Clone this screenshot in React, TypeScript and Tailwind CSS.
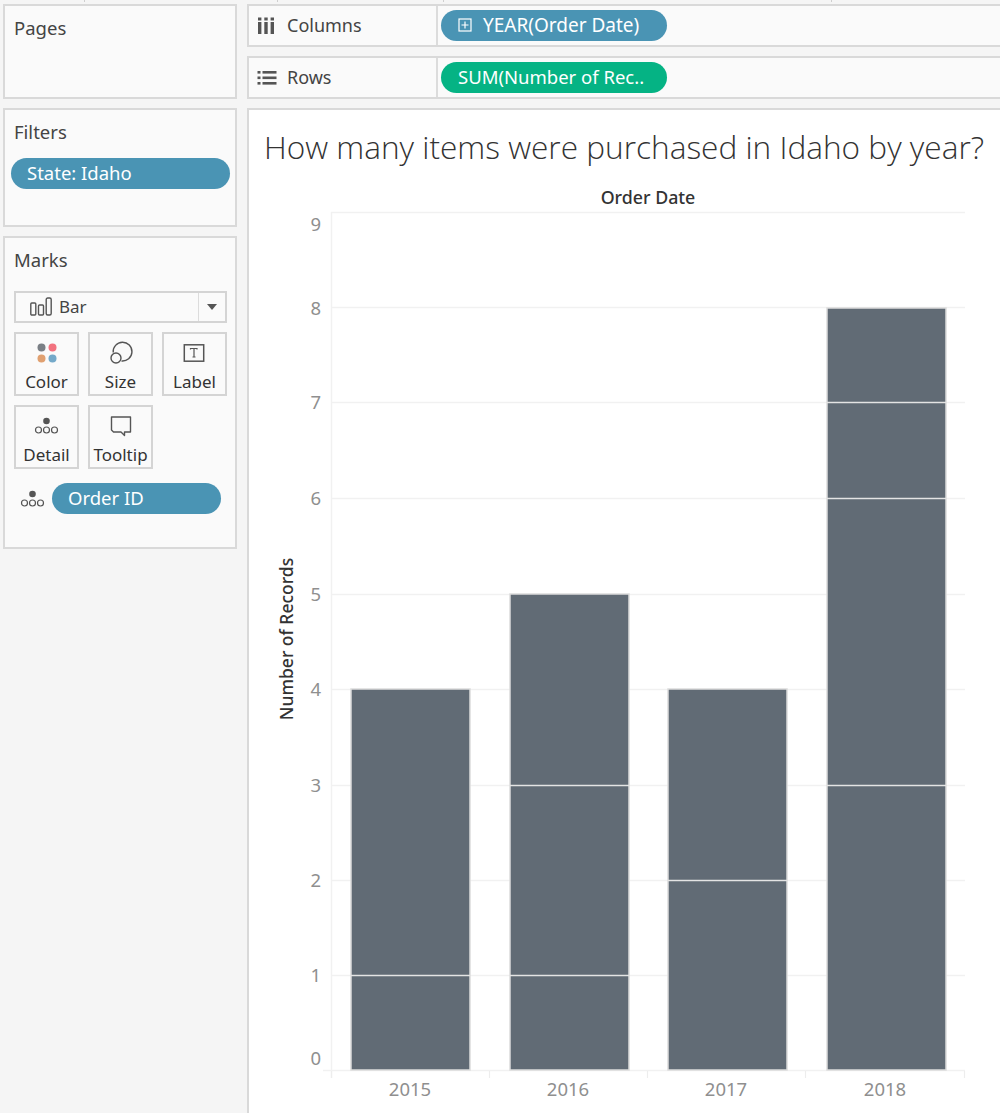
import React from "react";

const font = { fontFamily: '"Noto Sans", "Open Sans", sans-serif' };

function DetailIcon() {
  return (
    <svg width="25" height="20" viewBox="0 0 25 20" fill="none" stroke="#555" strokeWidth="1.2">
      <circle cx="12.5" cy="5" r="3.3" fill="#555" stroke="none" />
      <circle cx="4.5" cy="14" r="3" />
      <circle cx="12.5" cy="14" r="3" />
      <circle cx="20.5" cy="14" r="3" />
    </svg>
  );
}

function MarkCard({ label, icon }: { label: string; icon: React.ReactNode }) {
  return (
    <div className="h-[64px] border-2 border-[#d4d4d4] flex flex-col items-center pt-[6px] text-[#333] text-[17px] leading-[24px]">
      <div className="h-[26px] flex items-center justify-center">{icon}</div>
      <div className="mt-[4px] whitespace-nowrap">{label}</div>
    </div>
  );
}

function Pill({ children, className }: { children: React.ReactNode; className: string }) {
  return (
    <div className={`h-[31px] pb-[1px] rounded-full text-white text-[18.5px] flex items-center whitespace-nowrap ${className}`}>{children}</div>
  );
}

function Shelf({ icon, label, children }: { icon: React.ReactNode; label: string; children: React.ReactNode }) {
  return (
    <div className="h-[43px] shrink-0 border-y-2 border-l-2 border-[#d9d9d9] bg-[#fafafa] flex">
      <div className="w-[189px] border-r-2 border-[#dcdcdc] flex items-center pl-[8px] text-[#444] text-[18px]">
        <div className="w-[30px]">{icon}</div>
        {label}
      </div>
      <div className="flex items-center pl-[3px]">{children}</div>
    </div>
  );
}

const grid = [212, 307, 402, 498, 594, 689, 785, 880, 975, 1070];
const bars = [
  { x: 351, top: 689, lines: [975] },
  { x: 510, top: 594, lines: [785, 975] },
  { x: 668, top: 689, lines: [880] },
  { x: 827, top: 308, lines: [402, 498, 785] },
];
const ticks = [331, 489, 647, 805, 964];
const years = [
  [410, "2015"],
  [568, "2016"],
  [726, "2017"],
  [885, "2018"],
] as const;
const labelY = [231, 315, 409, 505, 601, 696, 792, 887, 982, 1065];

function Chart() {
  return (
    <svg className="block" width="751" height="1003" viewBox="249 110 751 1003">
      <g fontFamily='"Noto Sans", sans-serif'>
        <text x="648" y="204" textAnchor="middle" fontSize="17.8" fontWeight="500" fill="#333">Order Date</text>
        {grid.map((y) => (
          <line key={y} x1={y === 1070 ? 323 : 331} x2="965" y1={y + 0.5} y2={y + 0.5} stroke="#f1f1f1" strokeWidth="1.5" />
        ))}
        <line x1="331.5" x2="331.5" y1="212" y2="1078" stroke="#f1f1f1" strokeWidth="1.5" />
        {ticks.map((x) => (
          <line key={x} x1={x + 0.5} x2={x + 0.5} y1="1071" y2="1078" stroke="#ededed" strokeWidth="1.2" />
        ))}
        {bars.map((b) => (
          <g key={b.x}>
            <rect x={b.x} y={b.top} width="119" height={1070 - b.top} fill="#616b75" stroke="#dcdcdc" strokeWidth="1.5" />
            {b.lines.map((y) => (
              <line key={y} x1={b.x} x2={b.x + 119} y1={y + 0.5} y2={y + 0.5} stroke="#e4e4e4" strokeWidth="1.3" />
            ))}
          </g>
        ))}
        {labelY.map((y, i) => (
          <text key={y} x="321" y={y} textAnchor="end" fontSize="18.5" fill="#8f8f8f">{9 - i}</text>
        ))}
        {years.map(([x, t]) => (
          <text key={t} x={x} y="1096" textAnchor="middle" fontSize="18.5" fill="#8f8f8f">{t}</text>
        ))}
        <text transform="translate(293 639) rotate(-90)" textAnchor="middle" fontSize="17.5" fontWeight="500" fill="#333">Number of Records</text>
      </g>
    </svg>
  );
}

export default function App() {
  return (
    <div style={font} className="relative w-[1000px] h-[1113px] overflow-hidden bg-[#f5f5f5] flex pt-[4px] pl-[3px] gap-[10px]">
      <div className="absolute left-[84px] top-0 w-px h-[2px] bg-[#cfcfcf]" />
      <div className="absolute left-[277px] top-0 w-px h-[2px] bg-[#cfcfcf]" />
      <div className="absolute left-[443px] top-0 w-px h-[2px] bg-[#cfcfcf]" />
      <div className="absolute left-[831px] top-0 w-px h-[2px] bg-[#cfcfcf]" />
      <div className="w-[234px] flex flex-col gap-[9px]">
        <div className="h-[95px] border-2 border-[#d9d9d9] bg-[#fafafa] pl-[9px] pt-[8px] text-[18.5px] leading-[28px] text-[#444]">Pages</div>
        <div className="h-[119px] border-2 border-[#d9d9d9] bg-[#fafafa] pt-[8px] text-[18.5px] leading-[28px] text-[#444]">
          <div className="pl-[9px]">Filters</div>
          <Pill className="w-[219px] ml-[6px] mt-[12px] pl-[16px] bg-[#4a94b4]">State: Idaho</Pill>
        </div>
        <div className="h-[313px] border-2 border-[#d9d9d9] bg-[#fafafa] pt-[8px] px-[9px] text-[18.5px] text-[#444]">
          <div className="leading-[28px]">Marks</div>
          <div className="mt-[17px] h-[32px] w-[213px] border-2 border-[#d4d4d4] flex text-[17px]">
            <div className="flex-1 flex items-center pl-[14px] gap-[7px]">
              <svg width="22" height="20" viewBox="0 0 22 20" fill="none" stroke="#555" strokeWidth="1.4">
                <rect x="0.8" y="6" width="5" height="12" rx="1" />
                <rect x="8.5" y="8" width="5" height="10" rx="1" />
                <rect x="16.2" y="1" width="5" height="17" rx="1.5" />
              </svg>
              Bar
            </div>
            <div className="w-[27px] border-l border-[#dcdcdc] flex items-center justify-center">
              <svg width="12" height="8" viewBox="0 0 12 8"><path d="M1 1h10L6 7z" fill="#555" /></svg>
            </div>
          </div>
          <div className="mt-[9px] grid grid-cols-[65px_65px_65px] gap-x-[9px] gap-y-[9px] w-[213px]">
            <MarkCard
              label="Color"
              icon={
                <svg width="20" height="20" viewBox="0 0 20 20">
                  <circle cx="4.5" cy="4.5" r="4" fill="#7a7f85" />
                  <circle cx="15.5" cy="4.5" r="4" fill="#f2727f" />
                  <circle cx="4.5" cy="15.5" r="4" fill="#e0a070" />
                  <circle cx="15.5" cy="15.5" r="4" fill="#74a9c9" />
                </svg>
              }
            />
            <MarkCard
              label="Size"
              icon={
                <svg width="24" height="24" viewBox="0 0 24 24" fill="none" stroke="#555" strokeWidth="1.4">
                  <path d="M4.2 11.5A9.4 9.4 0 1 1 12.5 20" />
                  <circle cx="7" cy="17" r="5" />
                </svg>
              }
            />
            <MarkCard
              label="Label"
              icon={
                <svg width="24" height="20" viewBox="0 0 24 20" fill="none" stroke="#555" className="mr-[2px]">
                  <rect x="2.3" y="1.8" width="19.4" height="16.4" strokeWidth="1.5" />
                  <path d="M8.5 6.5V5.5h6.5v1M12 5.5v8.5M10.5 14h3" strokeWidth="1.2" />
                </svg>
              }
            />
            <MarkCard label="Detail" icon={<DetailIcon />} />
            <MarkCard
              label="Tooltip"
              icon={
                <svg width="24" height="22" viewBox="0 0 24 22" fill="none" stroke="#555" strokeWidth="1.4">
                  <path d="M2.5 2h19v15h-6v3.5L12 17H4.5l-2-2z" strokeLinejoin="round" />
                </svg>
              }
            />
          </div>
          <div className="mt-[14px] flex items-center pl-[6px]">
            <DetailIcon />
            <Pill className="w-[169px] ml-[7px] pl-[16px] bg-[#4a94b4]">Order ID</Pill>
          </div>
        </div>
      </div>
      <div className="flex-1 min-w-0 flex flex-col gap-[9px]">
        <Shelf
          label="Columns"
          icon={
            <svg width="18" height="18" viewBox="0 0 18 18" fill="#555">
              <rect x="1" y="5" width="3.4" height="12" />
              <rect x="1" y="0.5" width="3.4" height="3" />
              <rect x="7.3" y="5" width="3.4" height="12" />
              <rect x="7.3" y="0.5" width="3.4" height="3" />
              <rect x="13.6" y="5" width="3.4" height="12" />
              <rect x="13.6" y="0.5" width="3.4" height="3" />
            </svg>
          }
        >
          <Pill className="w-[226px] pl-[17px] bg-[#4a94b4]">
            <svg width="14" height="14" viewBox="0 0 14 14" fill="none" stroke="#fff" strokeWidth="1.2" className="mr-[11px]">
              <rect x="1" y="1" width="12" height="12" />
              <path d="M7 3.5v7M3.5 7h7" />
            </svg>
            <span className="text-[19px]">YEAR(Order Date)</span>
          </Pill>
        </Shelf>
        <Shelf
          label="Rows"
          icon={
            <svg width="20" height="16" viewBox="0 0 20 16" fill="#555">
              <rect x="0.5" y="1" width="3" height="2.6" />
              <rect x="5.5" y="1" width="14" height="2.6" />
              <rect x="0.5" y="6.5" width="3" height="2.6" />
              <rect x="5.5" y="6.5" width="14" height="2.6" />
              <rect x="0.5" y="12" width="3" height="2.6" />
              <rect x="5.5" y="12" width="14" height="2.6" />
            </svg>
          }
        >
          <Pill className="w-[226px] pl-[17px] bg-[#05b384]">SUM(Number of Rec..</Pill>
        </Shelf>
        <div className="flex-1 min-h-0 border-l-2 border-t-2 border-[#d9d9d9] bg-white relative">
          <div className="absolute left-[15px] top-[17px] font-['Open_Sans'] text-[31.6px] leading-[40px] font-light text-[#333] whitespace-nowrap">How many items were purchased in Idaho by year?</div>
          <Chart />
        </div>
      </div>
    </div>
  );
}
